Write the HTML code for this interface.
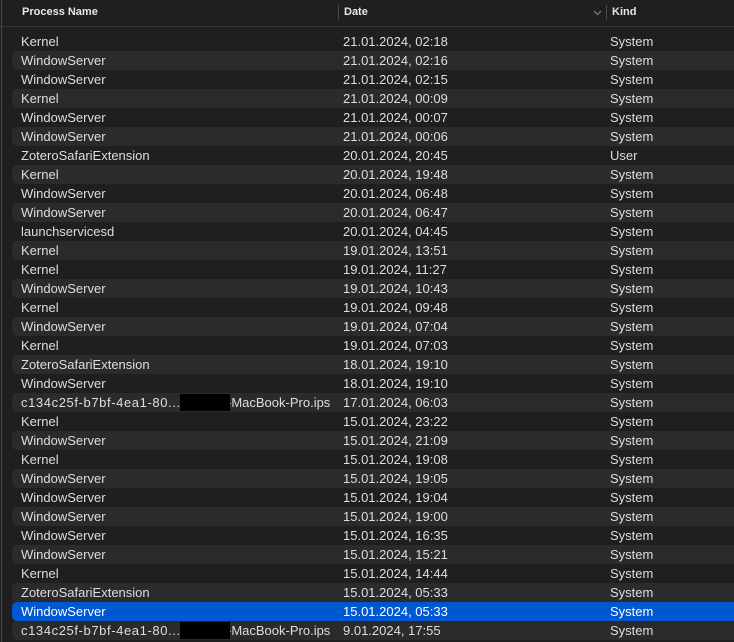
<!DOCTYPE html>
<html><head><meta charset="utf-8"><style>
html,body{margin:0;padding:0;}
body{width:734px;height:642px;background:#1f1f21;overflow:hidden;position:relative;font-family:"Liberation Sans",Helvetica,Arial,sans-serif;}
.lb{position:absolute;left:1px;top:0;width:1px;height:642px;background:#4a4a4c;}
.hdr{position:absolute;left:0;top:0;width:734px;height:26px;border-bottom:1px solid #38383a;}
.h{position:absolute;top:6px;font-size:11px;font-weight:bold;color:#e8e8e8;}
.sep{position:absolute;top:5px;width:1px;height:15px;background:#4a4a4c;}
.row{position:absolute;left:12px;width:722px;height:19px;font-size:13px;color:#dedede;border-radius:5px 0 0 5px;}
.row.s{background:#2b2b2d;}
.row.sel{background:#0058d0;color:#fff;}
.row span{position:absolute;top:2px;white-space:nowrap;}
.n{left:9px;}.d{left:331px;}.k{left:598px;}
.blk{position:absolute;left:168px;top:1px;width:50px;height:17px;background:#000;}
</style></head><body>
<div class="lb"></div>
<div class="hdr">
<div class="h" style="left:22px">Process Name</div>
<div class="sep" style="left:338px"></div>
<div class="h" style="left:344px">Date</div>
<svg style="position:absolute;left:593px;top:10px" width="9" height="6" viewBox="0 0 9 6"><path d="M1 1 L4.5 4.5 L8 1" stroke="#8a8a8c" stroke-width="1.1" fill="none"/></svg>
<div class="sep" style="left:606px"></div>
<div class="h" style="left:612px">Kind</div>
</div>
<div id="rows"></div>
<script>
var d=[["Kernel","21.01.2024, 02:18","System"],["WindowServer","21.01.2024, 02:16","System"],["WindowServer","21.01.2024, 02:15","System"],["Kernel","21.01.2024, 00:09","System"],["WindowServer","21.01.2024, 00:07","System"],["WindowServer","21.01.2024, 00:06","System"],["ZoteroSafariExtension","20.01.2024, 20:45","User"],["Kernel","20.01.2024, 19:48","System"],["WindowServer","20.01.2024, 06:48","System"],["WindowServer","20.01.2024, 06:47","System"],["launchservicesd","20.01.2024, 04:45","System"],["Kernel","19.01.2024, 13:51","System"],["Kernel","19.01.2024, 11:27","System"],["WindowServer","19.01.2024, 10:43","System"],["Kernel","19.01.2024, 09:48","System"],["WindowServer","19.01.2024, 07:04","System"],["Kernel","19.01.2024, 07:03","System"],["ZoteroSafariExtension","18.01.2024, 19:10","System"],["WindowServer","18.01.2024, 19:10","System"],["X","17.01.2024, 06:03","System"],["Kernel","15.01.2024, 23:22","System"],["WindowServer","15.01.2024, 21:09","System"],["Kernel","15.01.2024, 19:08","System"],["WindowServer","15.01.2024, 19:05","System"],["WindowServer","15.01.2024, 19:04","System"],["WindowServer","15.01.2024, 19:00","System"],["WindowServer","15.01.2024, 16:35","System"],["WindowServer","15.01.2024, 15:21","System"],["Kernel","15.01.2024, 14:44","System"],["ZoteroSafariExtension","15.01.2024, 05:33","System"],["WindowServer","15.01.2024, 05:33","System"],["X","9.01.2024, 17:55","System"]];
var h="";
for(var i=0;i<d.length;i++){
var c="row"+(i==30?" sel":(i%2==1?" s":""));
var n=d[i][0]=="X"?'<i style="font-style:normal;letter-spacing:0.6px">c134c25f-b7bf-4ea1-80...</i></span><span style="left:215px">-MacBook-Pro.ips':d[i][0];
h+='<div class="'+c+'" style="top:'+(32+19*i)+'px"><span class="n">'+n+'</span><span class="d">'+d[i][1]+'</span><span class="k">'+d[i][2]+'</span>'+(d[i][0]=="X"?'<div class="blk"></div>':'')+'</div>';
}
document.getElementById("rows").innerHTML=h;
</script>
</body></html>
